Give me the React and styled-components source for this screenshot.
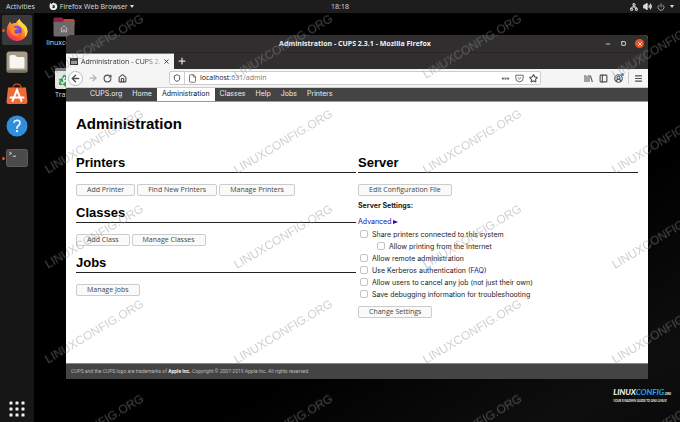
import React, { useState } from 'react';
import styled, { createGlobalStyle } from 'styled-components';
import {
  ArrowLeft, ArrowRight, RotateCw, House, Shield, File, Ellipsis, Star,
  PanelLeft, CircleUserRound, Menu, Plus, X, Power, Network, Volume2, Minus, Square, Recycle,
} from 'lucide-react';

const navLinks = ['CUPS.org', 'Home', 'Administration', 'Classes', 'Help', 'Jobs', 'Printers'];

const sections = [
  { title: 'Printers', actions: ['Add Printer', 'Find New Printers', 'Manage Printers'] },
  { title: 'Classes', actions: ['Add Class', 'Manage Classes'] },
  { title: 'Jobs', actions: ['Manage Jobs'] },
];

const settings = [
  { id: 'share', label: 'Share printers connected to this system' },
  { id: 'internet', label: 'Allow printing from the Internet', nested: true },
  { id: 'remote', label: 'Allow remote administration' },
  { id: 'kerberos', label: 'Use Kerberos authentication', faq: true },
  { id: 'cancel', label: 'Allow users to cancel any job (not just their own)' },
  { id: 'debug', label: 'Save debugging information for troubleshooting' },
];

function FirefoxLogo() {
  return (
    <svg width="24" height="24" viewBox="0 0 24 24" aria-hidden="true">
      <defs>
        <linearGradient id="fox" x1="0.8" y1="0" x2="0.2" y2="1">
          <stop offset="0" stopColor="#ffe14a" />
          <stop offset="0.4" stopColor="#ff9a28" />
          <stop offset="0.75" stopColor="#ff4a3c" />
          <stop offset="1" stopColor="#e8256f" />
        </linearGradient>
        <radialGradient id="globe" cx="0.5" cy="0.3" r="0.7">
          <stop offset="0" stopColor="#9a5bff" />
          <stop offset="1" stopColor="#4a35b0" />
        </radialGradient>
      </defs>
      <path d="M3.5 6.2 L5.2 3.6 L6.4 6 Q9 4.5 11 5 Q12 2.5 14.6 1 Q15 3.5 18 5.5 Q22.6 9 22.5 13.5 A10.4 9.6 0 0 1 1.6 13.5 Q1.4 9 3.5 6.2Z" fill="url(#fox)" />
      <path d="M14.6 1 Q15 3.5 18 5.5 Q22.6 9 22.5 13.5 Q22 17 20 19 Q20.5 12 17 9.5 Q13 7 12.6 4.5 Q13 2.4 14.6 1Z" fill="#ffd33d" />
      <circle cx="11.8" cy="12.8" r="5" fill="url(#globe)" />
      <path d="M4.6 9 Q7.5 8.2 9.8 9.8 Q12 9.8 12.2 10.8 Q10.6 11.4 9.6 12.8 Q8.6 15.6 12.6 15.6 Q14.6 15.2 16 14 Q14.6 18.4 10.2 18 Q5 16.6 4.6 9Z" fill="#ff8a2a" />
    </svg>
  );
}

function FilesIcon() {
  return (
    <svg width="22" height="22" viewBox="0 0 22 22" aria-hidden="true">
      <rect x="0.5" y="0.5" width="21" height="21" rx="3" fill="#a59c8c" />
      <rect x="0.5" y="19" width="21" height="2.5" rx="1.2" fill="#7d7567" />
      <path d="M3.5 5.5 Q3.5 4 5 4 H9 L11 6 H17 Q18.5 6 18.5 7.5 V16 Q18.5 17.5 17 17.5 H5 Q3.5 17.5 3.5 16Z" fill="#f8f6f1" />
    </svg>
  );
}

function SoftwareIcon() {
  return (
    <svg width="22" height="22" viewBox="0 0 22 22" aria-hidden="true">
      <path d="M7 5 Q7 1.2 11 1.2 Q15 1.2 15 5" fill="none" stroke="#c7512a" strokeWidth="1.2" />
      <path d="M2 4.5 H20 L21.5 19 Q21.5 21 19.5 21 H2.5 Q0.5 21 0.5 19Z" fill="#ee6a36" />
      <path d="M6.5 18 L11 7 L15.5 18 M4.5 14.5 H17.5" fill="none" stroke="#fff" strokeWidth="2" strokeLinecap="round" />
    </svg>
  );
}

function HelpIcon() {
  return (
    <svg width="22" height="22" viewBox="0 0 22 22" aria-hidden="true">
      <circle cx="11" cy="11" r="10.5" fill="#2f8fdd" />
      <path d="M8 7.2 Q8.6 5.2 11 5.2 Q14 5.3 14 8 Q14 9.6 12.3 10.7 Q11 11.5 11 13.2" fill="none" stroke="#fff" strokeWidth="1.6" strokeLinecap="round" />
      <circle cx="11" cy="16.2" r="1.1" fill="#fff" />
    </svg>
  );
}

function TerminalIcon() {
  return (
    <svg width="22" height="18" viewBox="0 0 22 18" aria-hidden="true">
      <rect x="0.5" y="0.5" width="21" height="17" rx="2" fill="#4b4b4b" stroke="#5d5d5d" />
      <path d="M3.2 3 L5.6 4.4 L3.2 5.8 M6.8 7.2 H10" fill="none" stroke="#e4e4e4" strokeWidth="0.9" />
    </svg>
  );
}

function AppsGrid() {
  return (
    <svg width="16" height="16" viewBox="0 0 16 16" aria-hidden="true">
      {[0, 6, 12].map(y => [0, 6, 12].map(x => (
        <rect key={`${x}-${y}`} x={x + 0.5} y={y + 0.5} width="3" height="3" rx="0.6" fill="#f2f2f2" />
      )))}
    </svg>
  );
}

function HomeFolder() {
  return (
    <svg width="22" height="20" viewBox="0 0 22 20" aria-hidden="true">
      <path d="M0.5 2 Q0.5 0.5 2 0.5 H9 L10.5 2 H20 Q21.5 2 21.5 3.5 V8 H0.5Z" fill="#8e2148" />
      <path d="M10.5 2 H20 Q21.5 2 21.5 3.5 V8 H12Z" fill="#c4472f" />
      <path d="M0.5 5 H9 L10.5 4 H21.5 V18 Q21.5 19.5 20 19.5 H2 Q0.5 19.5 0.5 18Z" fill="#6d6969" />
      <path d="M7.5 12 L11 8.8 L14.5 12 M8.5 11.4 V15 H10.2 V12.8 H11.8 V15 H13.5 V11.4" fill="none" stroke="#c8c5c5" strokeWidth="0.8" />
    </svg>
  );
}

function FirefoxGlyph() {
  return (
    <svg width="9" height="9" viewBox="0 0 9 9" aria-hidden="true">
      <path d="M1.2 1 L2.6 2 Q3.6 1.4 4.6 0.5 Q5 1.4 6.8 1.6 Q8.5 3 8.3 5 A3.9 3.7 0 0 1 0.6 5 Q0.4 2.6 1.2 1Z" fill="#ececec" />
      <path d="M3 3.4 Q5 2.4 6 4.2 Q6.2 6 4.4 6.2 Q3.2 6 3.2 5 L4.6 4.2Z" fill="#222" />
    </svg>
  );
}

function PocketIcon() {
  return (
    <svg width="9" height="9" viewBox="0 0 9 9" fill="none" stroke="#5c5c5f" strokeWidth="0.9" aria-hidden="true">
      <path d="M0.8 1.2 H8.2 V4 A3.7 3.8 0 0 1 0.8 4Z M2.8 3.4 L4.5 5 L6.2 3.4" />
    </svg>
  );
}

function LibraryIcon() {
  return (
    <svg width="9" height="9" viewBox="0 0 9 9" fill="none" stroke="#5c5c5f" strokeWidth="1.1" aria-hidden="true">
      <path d="M1 1 V8 M3 1.8 V8 M5 1 V8 M6.3 1.5 L8.4 8" />
    </svg>
  );
}

function Watermark() {
  return (
    <WatermarkLayer aria-hidden="true">
      <defs>
        <pattern id="mark" width="189" height="95" patternUnits="userSpaceOnUse">
          <g transform="translate(48 79) rotate(-31)">
            <text fill="#888" fillOpacity="0.4">LINUXCONFIG.ORG</text>
            <text x="1" y="-1" fill="#fff" fillOpacity="0.06">LINUXCONFIG.ORG</text>
          </g>
        </pattern>
      </defs>
      <rect width="100%" height="100%" fill="url(#mark)" />
    </WatermarkLayer>
  );
}

function App() {
  const [checked, setChecked] = useState({});
  const [address, setAddress] = useState('localhost:631/admin');

  const host = address.split(':')[0];
  const toggle = (id) => setChecked({ ...checked, [id]: !checked[id] });

  return (
    <Screen>
      <GlobalStyle />
      <TopBar>
        <TopLeft>
          <BarButton>Activities</BarButton>
          <BarButton><FirefoxGlyph />Firefox Web Browser<Caret /></BarButton>
        </TopLeft>
        <BarButton>18:18</BarButton>
        <Tray aria-label="System menu">
          <Network size={8} strokeWidth={3} />
          <Volume2 size={9} strokeWidth={3} fill="#ddd" />
          <Power size={8} strokeWidth={2} />
          <Caret />
        </Tray>
      </TopBar>

      <Workspace>
        <Dock>
          <DockItem aria-label="Firefox" $active $running><FirefoxLogo /></DockItem>
          <DockItem aria-label="Files"><FilesIcon /></DockItem>
          <DockItem aria-label="Software"><SoftwareIcon /></DockItem>
          <DockItem aria-label="Help"><HelpIcon /></DockItem>
          <DockItem aria-label="Terminal" $running><TerminalIcon /></DockItem>
          <DockItem aria-label="Show applications" $last><AppsGrid /></DockItem>
        </Dock>

        <Desktop>
          <DesktopIcons>
            <DesktopIcon><HomeFolder />linuxconfig</DesktopIcon>
            <DesktopIcon>
              <TrashBox><Recycle size={13} strokeWidth={3} /></TrashBox>
              Trash
            </DesktopIcon>
          </DesktopIcons>

          <BrowserWindow>
            <TitleBar>
              <span />
              <WindowTitle>Administration - CUPS 2.3.1 - Mozilla Firefox</WindowTitle>
              <WindowControls>
                <ControlButton aria-label="Minimize"><Minus size={6} strokeWidth={3} /></ControlButton>
                <ControlButton aria-label="Maximize"><Square size={5} strokeWidth={4} /></ControlButton>
                <ControlButton aria-label="Close" $close><X size={6} strokeWidth={4} /></ControlButton>
              </WindowControls>
            </TitleBar>

            <TabStrip>
              <Tab>
                <Favicon />
                <TabTitle>Administration - CUPS 2.</TabTitle>
                <TabClose aria-label="Close tab"><X size={7} strokeWidth={3} /></TabClose>
              </Tab>
              <NewTab aria-label="New tab"><Plus size={10} strokeWidth={3} /></NewTab>
            </TabStrip>

            <Toolbar>
              <NavButtons>
                <IconButton aria-label="Back" $round><ArrowLeft size={11} strokeWidth={3} /></IconButton>
                <IconButton aria-label="Forward" $faded><ArrowRight size={10} strokeWidth={3} /></IconButton>
                <IconButton aria-label="Reload"><RotateCw size={9} strokeWidth={3} /></IconButton>
                <IconButton aria-label="Home"><House size={9} strokeWidth={3} /></IconButton>
              </NavButtons>
              <UrlBar>
                <Shield size={8} strokeWidth={3} />
                <Divider />
                <File size={9} strokeWidth={2} />
                <UrlField>
                  <UrlInput aria-label="Address" value={address} onChange={e => setAddress(e.target.value)} />
                  <UrlText aria-hidden="true"><b>{host}</b>{address.slice(host.length)}</UrlText>
                </UrlField>
                <IconButton aria-label="Page actions"><Ellipsis size={9} strokeWidth={4} /></IconButton>
                <IconButton aria-label="Save to Pocket"><PocketIcon /></IconButton>
                <IconButton aria-label="Bookmark"><Star size={9} strokeWidth={3} /></IconButton>
              </UrlBar>
              <Tools>
                <IconButton aria-label="Library"><LibraryIcon /></IconButton>
                <IconButton aria-label="Sidebars"><PanelLeft size={9} strokeWidth={3} /></IconButton>
                <IconButton aria-label="Account"><CircleUserRound size={9} strokeWidth={3} /><Badge /></IconButton>
                <Divider />
                <IconButton aria-label="Menu"><Menu size={9} strokeWidth={3} /></IconButton>
              </Tools>
            </Toolbar>

            <SiteNav>
              {navLinks.map(link => (
                <NavLink key={link} href="#" $active={link === 'Administration'}>{link}</NavLink>
              ))}
            </SiteNav>

            <Page>
              <PageTitle>Administration</PageTitle>
              <Columns>
                <Column>
                  {sections.map(section => (
                    <Section key={section.title}>
                      <SectionTitle>{section.title}</SectionTitle>
                      <Actions>
                        {section.actions.map(action => <CupsButton key={action}>{action}</CupsButton>)}
                      </Actions>
                    </Section>
                  ))}
                </Column>
                <Column>
                  <SectionTitle>Server</SectionTitle>
                  <Actions><CupsButton>Edit Configuration File</CupsButton></Actions>
                  <SettingsTitle>Server Settings:</SettingsTitle>
                  <Advanced href="#">Advanced <Triangle /></Advanced>
                  {settings.map(({ id, label, nested, faq }) => (
                    <Setting key={id} $nested={nested}>
                      <Checkbox id={id} checked={!!checked[id]} onChange={() => toggle(id)} />
                      <label htmlFor={id}>
                        {label}{faq && <> (<PageLink href="#">FAQ</PageLink>)</>}
                      </label>
                    </Setting>
                  ))}
                  <Actions $spaced><CupsButton>Change Settings</CupsButton></Actions>
                </Column>
              </Columns>
            </Page>

            <Footer>
              CUPS and the CUPS logo are trademarks of <FooterLink href="#">Apple Inc.</FooterLink> Copyright © 2007-2019 Apple Inc. All rights reserved.
            </Footer>
          </BrowserWindow>

          <Brand>
            <BrandName>LINUX<em>CONFIG</em><small>.ORG</small></BrandName>
            <BrandLine>YOUR SYSADMIN GUIDE TO GNU/LINUX</BrandLine>
          </Brand>
        </Desktop>
      </Workspace>
      <Watermark />
    </Screen>
  );
}

export default App;

const uiFont = '"Open Sans", "Noto Sans", sans-serif';
const pageFont = 'Inter, "Liberation Sans", sans-serif';
const headingFont = '"Liberation Sans", Arial, sans-serif';

const GlobalStyle = createGlobalStyle`
  * { box-sizing: border-box; }
  body { margin: 0; background: #000; }
  button, input { font: inherit; color: inherit; }
  button { border: 0; padding: 0; background: none; }
  svg { flex: none; display: block; }
`;

const Screen = styled.div`
  position: relative;
  display: flex;
  flex-direction: column;
  min-height: 100vh;
  font-family: ${uiFont};
  font-size: 7px;
  color: #ddd;
  overflow: hidden;
`;

const TopBar = styled.header`
  display: grid;
  grid-template-columns: 1fr auto 1fr;
  align-items: center;
  height: 13px;
  padding: 0 6px;
  background: #1d1d1d;
`;

const TopLeft = styled.div`
  display: flex;
  gap: 14px;
`;

const BarButton = styled.button`
  display: flex;
  align-items: center;
  gap: 2px;
  font-weight: 500;
  line-height: 12px;
`;

const Caret = styled.span`
  border: 2px solid transparent;
  border-top: 3px solid #ddd;
  border-bottom: 0;
`;

const Tray = styled.button`
  display: flex;
  align-items: center;
  justify-self: end;
  gap: 5px;
`;

const Workspace = styled.div`
  display: flex;
  flex: 1;
`;

const Dock = styled.nav`
  display: flex;
  flex-direction: column;
  gap: 2px;
  width: 34px;
  padding: 2px 2px 3px;
  background: #161616;
`;

const DockItem = styled.button`
  position: relative;
  display: flex;
  align-items: center;
  justify-content: center;
  height: ${props => (props.$last ? '20px' : '30px')};
  margin-top: ${props => (props.$last ? 'auto' : '0')};
  border-radius: 2px;
  background: ${props => (props.$active ? '#3a3a3a' : 'none')};

  &::before {
    content: '';
    display: ${props => (props.$running ? 'block' : 'none')};
    position: absolute;
    left: 0;
    width: 3px;
    height: 3px;
    border-radius: 50%;
    background: #e95420;
  }
`;

const Desktop = styled.main`
  position: relative;
  flex: 1;
  background: linear-gradient(150deg, #000 65%, #0e0e0e 90%, #0a0a0a);
`;

const DesktopIcons = styled.div`
  display: flex;
  flex-direction: column;
  align-items: center;
  gap: 20px;
  width: 60px;
  padding-top: 4px;
`;

const DesktopIcon = styled.div`
  display: flex;
  flex-direction: column;
  align-items: center;
  gap: 1px;
  line-height: 10px;
`;

const TrashBox = styled.span`
  display: flex;
  align-items: center;
  justify-content: center;
  width: 18px;
  height: 21px;
  border-top: 3px solid #777;
  border-radius: 2px;
  background: #e4e4e4;
  color: #35a046;
`;

const BrowserWindow = styled.section`
  position: absolute;
  inset: 22px 32px 43px 32px;
  display: flex;
  flex-direction: column;
  border-radius: 4px 4px 0 0;
  overflow: hidden;
  background: #fff;
`;

const TitleBar = styled.div`
  display: grid;
  grid-template-columns: 1fr auto 1fr;
  align-items: center;
  height: 17px;
  padding-right: 4px;
  background: #302e2f;
`;

const WindowTitle = styled.span`
  font-weight: 700;
  color: #f2f2f2;
`;

const WindowControls = styled.div`
  display: flex;
  justify-content: flex-end;
  gap: 7px;
`;

const ControlButton = styled.button`
  display: flex;
  align-items: center;
  justify-content: center;
  width: 9px;
  height: 9px;
  border-radius: 50%;
  color: #eee;
  background: ${props => (props.$close ? '#e95420' : 'none')};
`;

const TabStrip = styled.div`
  display: flex;
  align-items: stretch;
  height: 17px;
  border-top: 1px solid #282627;
  background: #302e2f;
`;

const Tab = styled.div`
  display: flex;
  align-items: center;
  gap: 3px;
  min-width: 106px;
  padding: 0 4px;
  border-top: 1px solid #e95420;
  background: #f5f5f6;
  color: #333;
`;

const Favicon = styled.span`
  width: 8px;
  height: 7px;
  border: 1px solid #333;
  background: linear-gradient(#333 50%, #999 50%);
`;

const TabTitle = styled.span`
  flex: 1;
  white-space: nowrap;
  mask-image: linear-gradient(90deg, #000 80%, rgba(0, 0, 0, 0.3));
`;

const TabClose = styled.button`
  width: 7px;
`;

const NewTab = styled.button`
  padding: 0 3px;
  color: #ddd;
`;

const Toolbar = styled.div`
  display: flex;
  align-items: center;
  height: 19px;
  padding: 0 4px 0 2px;
  border-bottom: 1px solid #ccc;
  background: #f5f5f6;
  color: #4f4f52;
`;

const NavButtons = styled.div`
  display: flex;
  align-items: center;
  gap: 4px;
  width: 101px;
`;

const IconButton = styled.button`
  position: relative;
  display: flex;
  align-items: center;
  justify-content: center;
  min-width: ${props => (props.$round ? '15px' : '11px')};
  height: ${props => (props.$round ? '15px' : '11px')};
  border: ${props => (props.$round ? '1px solid #bbb' : '0')};
  border-radius: 50%;
  background: ${props => (props.$round ? '#fff' : 'none')};
  opacity: ${props => (props.$faded ? '0.4' : '1')};
`;

const UrlBar = styled.div`
  display: flex;
  align-items: center;
  flex: 1;
  gap: 3px;
  height: 14px;
  padding: 0 1px 0 3px;
  border: 1px solid #ccc;
  border-radius: 2px;
  background: #fff;
`;

const Divider = styled.span`
  width: 1px;
  height: 12px;
  background: #ccc;
`;

const UrlField = styled.div`
  display: grid;
  flex: 1;
  line-height: 10px;
  color: #777;

  > * { grid-area: 1 / 1; }
`;

const UrlInput = styled.input`
  width: 100%;
  border: 0;
  padding: 0;
  outline: 0;
  background: none;
  color: transparent;
  caret-color: #222;
`;

const UrlText = styled.span`
  pointer-events: none;

  b {
    font-weight: 500;
    color: #111;
  }
`;

const Badge = styled.span`
  position: absolute;
  top: 0;
  right: 0;
  width: 3px;
  height: 3px;
  border-radius: 50%;
  background: #0a9cf5;
`;

const Tools = styled.div`
  display: flex;
  align-items: center;
  justify-content: flex-end;
  gap: 4px;
  width: 103px;
`;

const SiteNav = styled.nav`
  display: flex;
  height: 14px;
  padding-left: 19px;
  background: #444;
  border-bottom: 1px solid #999;
  font-family: ${pageFont};
  font-size: 7px;
  line-height: 12px;
`;

const NavLink = styled.a`
  padding: 0 5px;
  text-decoration: none;
  color: ${props => (props.$active ? '#111' : '#eee')};
  background: ${props => (props.$active ? '#fff' : 'none')};
`;

const Page = styled.div`
  flex: 1;
  padding: 12px 10px 0;
  font-family: ${pageFont};
  font-size: 7px;
  color: #222;
`;

const PageTitle = styled.h1`
  margin: 0 0 20px;
  font-family: ${headingFont};
  font-size: 15px;
  line-height: 20px;
  color: #000;
`;

const Columns = styled.div`
  display: grid;
  grid-template-columns: 1fr 1fr;
  gap: 2px;
`;

const Column = styled.div`
  min-width: 0;
`;

const Section = styled.section`
  padding-bottom: 8px;
`;

const SectionTitle = styled.h2`
  margin: 0 0 11px;
  border-bottom: 1px solid #222;
  font-family: ${headingFont};
  font-size: 13px;
  line-height: 18px;
  color: #000;
`;

const Actions = styled.div`
  display: flex;
  gap: 2px;
  padding-top: ${props => (props.$spaced ? '6px' : '0')};
`;

const CupsButton = styled.button`
  height: 12px;
  padding: 0 10px;
  border: 1px solid #ccc;
  border-radius: 2px;
  background: #fafafa;
  font-family: ${uiFont};
  font-size: 7px;
  line-height: 10px;
  color: #444;
`;

const SettingsTitle = styled.h3`
  margin: 5px 0;
  font-size: 7px;
  line-height: 10px;
`;

const PageLink = styled.a`
  color: #1a0dab;
  text-decoration: none;
`;

const Advanced = styled(PageLink)`
  display: flex;
  align-items: center;
  gap: 2px;
  line-height: 12px;
`;

const Triangle = styled.span`
  border: 2px solid transparent;
  border-left: 5px solid #1a0dab;
  border-right: 0;
`;

const Setting = styled.div`
  display: flex;
  align-items: center;
  gap: 4px;
  height: 12px;
  padding-left: ${props => (props.$nested ? '19px' : '2px')};
`;

const Checkbox = styled.input.attrs({ type: 'checkbox' })`
  appearance: none;
  width: 8px;
  height: 8px;
  margin: 0;
  border: 1px solid #c4c4c4;
  border-radius: 2px;
  background: #fff;

  &:checked { background: #e95420; }
`;

const Footer = styled.footer`
  height: 16px;
  padding: 0 5px;
  border-top: 1px solid #888;
  background: #444;
  font-family: Roboto, "Liberation Sans", sans-serif;
  font-size: 5px;
  line-height: 14px;
  color: #bbb;
`;

const FooterLink = styled.a`
  font-weight: 700;
  text-decoration: none;
  color: #eee;
`;

const Brand = styled.div`
  position: absolute;
  right: 9px;
  bottom: 18px;
  font-family: Lato, "Open Sans", sans-serif;
  font-style: italic;
  color: #eee;
`;

const BrandName = styled.div`
  font-size: 8px;
  font-weight: 900;
  line-height: 10px;

  em { color: #1d9fe0; }
  small { font-size: 3px; }
`;

const BrandLine = styled.div`
  font-size: 3px;
  font-weight: 700;
  line-height: 5px;
`;

const WatermarkLayer = styled.svg`
  position: absolute;
  inset: 0;
  width: 100%;
  height: 100%;
  pointer-events: none;
  font-family: ${headingFont};
  font-size: 12px;
`;
